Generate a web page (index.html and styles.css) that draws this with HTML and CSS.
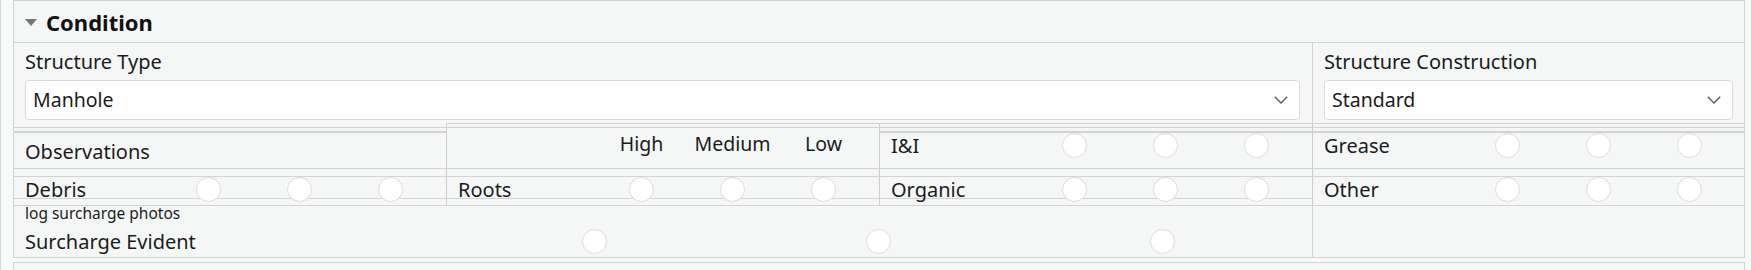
FILE: index.html
```html
<!DOCTYPE html>
<html lang="en">
<head>
<meta charset="utf-8">
<title>Condition</title>
<link rel="stylesheet" href="styles.css">
</head>
<body>
<div class="page">
  <section class="card">
    <header class="card-head">
      <span class="caret"></span>
      <h2 class="card-title">Condition</h2>
    </header>

    <div class="structure">
      <div class="field field-main">
        <label class="field-label">Structure Type</label>
        <div class="select">
          <span class="select-value">Manhole</span>
          <svg class="chev" width="14" height="8" viewBox="0 0 14 8"><polyline points="0.8,0.8 7,7 13.2,0.8" fill="none" stroke="#555" stroke-width="1.3"/></svg>
        </div>
      </div>
      <div class="field field-side">
        <label class="field-label">Structure Construction</label>
        <div class="select">
          <span class="select-value">Standard</span>
          <svg class="chev" width="14" height="8" viewBox="0 0 14 8"><polyline points="0.8,0.8 7,7 13.2,0.8" fill="none" stroke="#555" stroke-width="1.3"/></svg>
        </div>
      </div>
    </div>

    <div class="obs">
      <div class="group group-first">
        <div class="orow orow-a orow-thick orow-center">
          <span class="olabel">Observations</span>
        </div>
        <div class="orow orow-b">
          <span class="olabel">Debris</span>
          <span class="radio"></span><span class="radio"></span><span class="radio"></span>
        </div>
      </div>
      <div class="group group-up">
        <div class="orow orow-a orow-head">
          <span class="olabel"></span>
          <span class="hlabel">High</span><span class="hlabel">Medium</span><span class="hlabel">Low</span>
        </div>
        <div class="orow orow-b">
          <span class="olabel">Roots</span>
          <span class="radio"></span><span class="radio"></span><span class="radio"></span>
        </div>
      </div>
      <div class="group group-up">
        <div class="orow orow-a orow-thick orow-gap">
          <span class="olabel">I&amp;I</span>
          <span class="radio"></span><span class="radio"></span><span class="radio"></span>
        </div>
        <div class="orow orow-b">
          <span class="olabel">Organic</span>
          <span class="radio"></span><span class="radio"></span><span class="radio"></span>
        </div>
      </div>
      <div class="group group-up">
        <div class="orow orow-a orow-thick orow-gap">
          <span class="olabel">Grease</span>
          <span class="radio"></span><span class="radio"></span><span class="radio"></span>
        </div>
        <div class="orow orow-b">
          <span class="olabel">Other</span>
          <span class="radio"></span><span class="radio"></span><span class="radio"></span>
        </div>
      </div>
    </div>

    <div class="surcharge">
      <div class="hint">log surcharge photos</div>
      <div class="srow">
        <span class="olabel">Surcharge Evident</span>
        <span class="radio"></span><span class="radio"></span><span class="radio"></span>
      </div>
    </div>
  </section>

  <section class="card card-next"></section>
</div>
</body>
</html>
```
FILE: styles.css
```css
* { box-sizing: border-box; }

html, body {
  margin: 0;
  padding: 0;
  background: #f7f8f8;
  font-family: "Noto Sans", "Open Sans", sans-serif;
  color: #1b1b1b;
}

.page {
  height: 270px;
  overflow: hidden;
  border-left: 1px solid #dadada;
  padding-left: 12px;
}

.card {
  width: 1732px;
  background: #f5f7f7;
  border: 1px solid #d3d3d3;
}

/* header */
.card-head {
  height: 42px;
  border-bottom: 1px solid #d3d3d3;
  display: flex;
  align-items: center;
  padding-left: 11px;
}
.caret {
  width: 0;
  height: 0;
  border-left: 6.5px solid transparent;
  border-right: 6.5px solid transparent;
  border-top: 7px solid #777;
  margin-right: 9px;
  margin-top: 2px;
}
.card-title {
  margin: 0;
  font-size: 22px;
  font-weight: 700;
  line-height: 24px;
  color: #111;
}

/* structure fields */
.structure {
  display: grid;
  grid-template-columns: 1298px 1fr;
  border-bottom: 1px solid #d3d3d3;
  height: 85px;
}
.field {
  padding: 7px 12px 7px 11px;
}
.field-side {
  border-left: 1px solid #d3d3d3;
  padding-right: 11px;
}
.field-label {
  display: block;
  font-size: 20px;
  line-height: 24px;
  margin-bottom: 6px;
}
.select {
  height: 40px;
  background: #fff;
  border: 1px solid #dadada;
  border-radius: 4px;
  display: flex;
  align-items: center;
  justify-content: space-between;
  padding: 0 11px 0 7px;
}
.select-value {
  font-size: 19.5px;
  line-height: 24px;
}
.chev { display: block; }

/* observations */
.obs {
  display: grid;
  grid-template-columns: 432px 433px 433px 1fr;
  align-items: start;
}
.group-first {
  margin-top: 3px;
}
.group-up {
  margin-top: -5px;
  border-top: 1px solid #d3d3d3;
  border-left: 1px solid #cfcfcf;
}
.orow {
  display: grid;
  grid-template-columns: 138px 91px 91px 91px;
  align-items: start;
  padding-left: 11px;
}
.orow-a {
  border-bottom: 1px solid #d3d3d3;
  height: 45px;
  margin-bottom: 7px;
}
.orow-thick {
  border-top: 2px solid #d3d3d3;
  height: 38px;
}
.orow-gap {
  margin-top: 7px;
}
.orow-center {
  align-items: center;
  padding-top: 2px;
}
.orow-head {
  padding-top: 7px;
}
.orow-b {
  border-top: 1px solid #d3d3d3;
  border-bottom: 1px solid #d3d3d3;
  height: 30px;
}
.olabel {
  font-size: 20px;
  line-height: 25px;
  white-space: nowrap;
}
.hlabel {
  font-size: 19.5px;
  line-height: 25px;
  text-align: center;
}
.radio {
  position: relative;
  z-index: 1;
  justify-self: center;
  width: 25px;
  height: 25px;
  border-radius: 50%;
  background: #fff;
  border: 1px solid #dcdcdc;
}

/* surcharge */
.surcharge {
  width: 1299px;
  margin-top: -8px;
  border-top: 1px solid #d3d3d3;
  border-right: 1px solid #d3d3d3;
  padding: 5px 9px 3px 11px;
}
.hint {
  font-size: 15.5px;
  line-height: 18px;
  margin-bottom: 7px;
}
.srow {
  display: grid;
  grid-template-columns: 427px 284px 284px 284px;
  align-items: start;
  height: 25px;
}

.card-next {
  margin-top: 4px;
  height: 20px;
  border-bottom: none;
}
```
